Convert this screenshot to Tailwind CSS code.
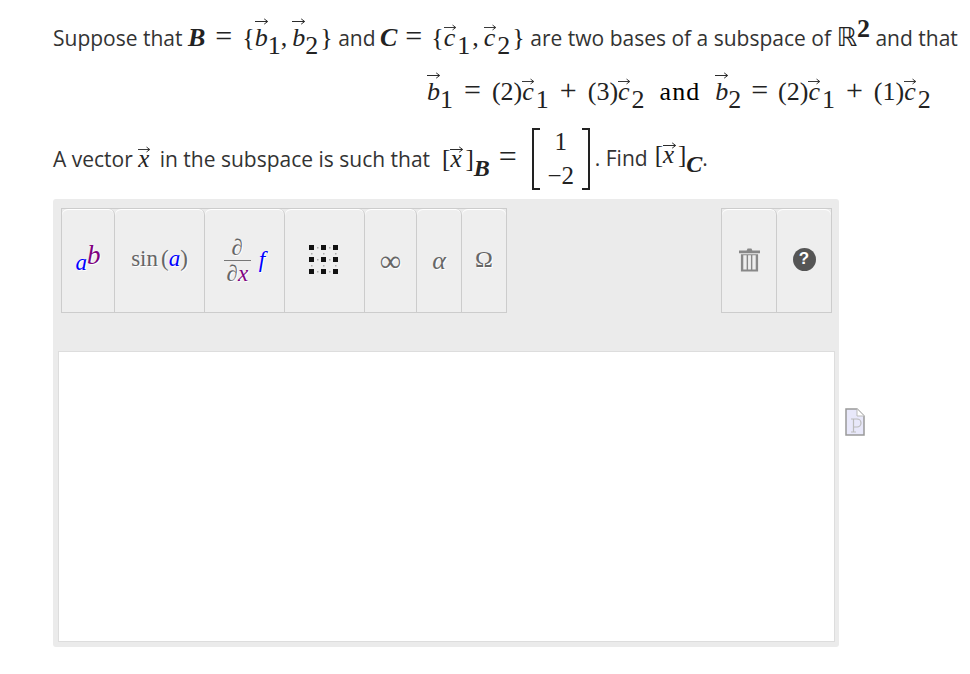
<!DOCTYPE html>
<html lang="en">
  <head>
    <meta charset="UTF-8" />
    <script src="https://cdn.jsdelivr.net/npm/@tailwindcss/browser@4"></script>
    <title>Change of basis</title>
  </head>
  <body class="bg-white w-[970px] h-[674px] overflow-hidden font-['Open_Sans',sans-serif] text-[21px] text-[#333]">
    <svg class="hidden">
      <symbol id="arr" viewBox="0 0 16 8"><path d="M0 4h14M10.500 1l4 3-4 3" fill="none" stroke="#222" stroke-width="1.100" /></symbol>
    </svg>

    <div class="pl-[53px] whitespace-nowrap">
      <!-- first sentence -->
      <div class="h-[68px] pt-[7px] leading-[44px]">
        Suppose that
        <span class="font-['Liberation_Serif',serif] text-[26px] text-[#222]"><b class="italic">B</b><span class="mx-[10px] text-[30px]">=</span>{<span class="relative inline-block italic">b<svg class="absolute left-[0px] top-[2px] w-[14px] h-[7px]"><use href="#arr" /></svg></span><span class="align-[-8px]">1</span><span class="mr-[5px]">,</span><span class="relative inline-block italic">b<svg class="absolute left-[0px] top-[2px] w-[14px] h-[7px]"><use href="#arr" /></svg></span><span class="align-[-8px]">2</span><span class="ml-[2px]">}</span></span>
        and
        <span class="ml-[-1px] font-['Liberation_Serif',serif] text-[26px] text-[#222]"><b class="italic">C</b><span class="ml-[8px] mr-[9px] text-[30px]">=</span>{<span class="relative inline-block italic pr-[2px]">c<svg class="absolute left-[0px] top-[8px] w-[13px] h-[7px]"><use href="#arr" /></svg></span><span class="align-[-8px]">1</span><span class="ml-[2px] mr-[5px]">,</span><span class="relative inline-block italic pr-[2px]">c<svg class="absolute left-[0px] top-[8px] w-[13px] h-[7px]"><use href="#arr" /></svg></span><span class="align-[-8px]">2</span><span class="ml-[2px]">}</span></span>
        are two bases of a subspace of
        <span class="font-['Liberation_Serif',serif] text-[26px] text-[#222]"><span class="font-['DejaVu_Sans',sans-serif] text-[26px]">ℝ</span><span class="align-[9px] font-bold">2</span></span>
        and that
      </div>

      <!-- display equation -->
      <div class="h-[50px] pl-[374px] leading-[44px] font-['Liberation_Serif',serif] text-[26px] text-[#222]">
        <span class="relative inline-block italic">b<svg class="absolute left-[0px] top-[2px] w-[14px] h-[7px]"><use href="#arr" /></svg></span><span class="align-[-8px]">1</span><span class="mx-[11px] text-[30px]">=</span>(2)<span class="relative inline-block italic pr-[2px]">c<svg class="absolute left-[0px] top-[8px] w-[13px] h-[7px]"><use href="#arr" /></svg></span><span class="align-[-8px]">1</span><span class="mx-[11px] text-[30px]">+</span>(3)<span class="relative inline-block italic pr-[2px]">c<svg class="absolute left-[0px] top-[8px] w-[13px] h-[7px]"><use href="#arr" /></svg></span><span class="align-[-8px]">2</span><span class="mx-[15px] tracking-[1px] text-black">and</span><span class="relative inline-block italic">b<svg class="absolute left-[0px] top-[2px] w-[14px] h-[7px]"><use href="#arr" /></svg></span><span class="align-[-8px]">2</span><span class="mx-[10px] text-[30px]">=</span>(2)<span class="relative inline-block italic pr-[2px]">c<svg class="absolute left-[0px] top-[8px] w-[13px] h-[7px]"><use href="#arr" /></svg></span><span class="align-[-8px]">1</span><span class="mx-[11px] text-[30px]">+</span>(1)<span class="relative inline-block italic pr-[2px]">c<svg class="absolute left-[0px] top-[8px] w-[13px] h-[7px]"><use href="#arr" /></svg></span><span class="align-[-8px]">2</span>
      </div>

      <!-- coordinates -->
      <div class="h-[81px] flex items-center">
        <span>A vector <span class="font-['Liberation_Serif',serif] text-[25px] text-[#222]"><span class="relative inline-block italic w-[16px]">x<svg class="absolute left-[0px] top-[6px] w-[13px] h-[7px]"><use href="#arr" /></svg></span></span> in the subspace is such that</span>
        <span class="ml-[12px] font-['Liberation_Serif',serif] text-[25px] text-[#222]">[<span class="relative inline-block italic w-[15px]">x<svg class="absolute left-[0px] top-[6px] w-[14px] h-[7px]"><use href="#arr" /></svg></span>]<b class="italic align-[-9px] text-[24px]">B</b><span class="ml-[9px] text-[32px]">=</span></span>
        <div class="ml-[15px] flex items-stretch h-[62px] font-['Liberation_Serif',serif] text-[25px] text-[#222]">
          <div class="w-[8px] border-2 border-r-0 border-[#222]"></div>
          <div class="w-[42px] flex flex-col items-center justify-between leading-[28px]"><span>1</span><span>−2</span></div>
          <div class="w-[8px] border-2 border-l-0 border-[#222]"></div>
        </div>
        <span class="ml-[5px]">. Find</span>
        <span class="ml-[7px] font-['Liberation_Serif',serif] text-[25px] text-[#222]">[<span class="relative inline-block italic w-[15px]">x<svg class="absolute left-[0px] top-[6px] w-[14px] h-[7px]"><use href="#arr" /></svg></span>]<b class="italic align-[-9px] text-[24px]">C</b></span>
        <span>.</span>
      </div>
    </div>

    <div class="flex items-start">
      <!-- editor -->
      <div class="ml-[53px] w-[786px] h-[448px] bg-[#ebebeb] rounded-[3px] pl-[5px] pr-[4px] pt-[9px] font-['Liberation_Serif',serif] [text-shadow:1px_1px_0_#fff]">
        <div class="flex justify-between pl-[3px] pr-[3px] h-[105px]">
          <div class="flex border border-[#ccc]">
            <div class="w-[53px] border-r border-[#ccc] bg-[#eee] rounded-t-[6px] shadow-[inset_0_1px_0_#fff] flex items-center justify-center pb-[2px]"><span class="italic text-[23px] text-[#0000ff] mt-[8px]">a</span><span class="italic text-[27px] text-[#800080] mb-[8px]">b</span></div>
            <div class="w-[90px] border-r border-[#ccc] bg-[#eee] rounded-t-[6px] shadow-[inset_0_1px_0_#fff] flex items-center justify-center text-[#666] text-[23px] pb-[2px]">sin<span class="ml-[3px]">(</span><span class="italic text-[#0000ff]">a</span>)</div>
            <div class="w-[80px] border-r border-[#ccc] bg-[#eee] rounded-t-[6px] shadow-[inset_0_1px_0_#fff] flex items-center justify-center gap-[8px] text-[23px]">
              <div class="flex flex-col items-center text-[#666] leading-[25px]"><span>∂</span><span class="w-[27px] border-t border-[#777]"></span><span>∂<i class="text-[#800080]">x</i></span></div>
              <span class="italic text-[#0000ff]">f</span>
            </div>
            <div class="w-[80px] border-r border-[#ccc] bg-[#eee] rounded-t-[6px] shadow-[inset_0_1px_0_#fff] flex items-center justify-center pb-[4px]">
              <svg class="w-[32px] h-[32px] mr-[3px]" viewBox="0 0 32 32" fill="#111">
                <path d="M2 2h5v5H2zM14 2h5v5h-5zM26 2h5v5h-5zM2 14h5v5H2zM14 14h5v5h-5zM26 14h5v5h-5zM2 26h5v5H2zM14 26h5v5h-5zM26 26h5v5h-5z" />
                <path fill="#aaa" d="M10 4h1.500v1.500H10zM22 4h1.500v1.500H22zM10 16h1.500v1.500H10zM22 16h1.500v1.500H22zM10 28h1.500v1.500H10zM22 28h1.500v1.500H22zM4 10h1.500v1.500H4zM16 10h1.500v1.500H16zM28 10h1.500v1.500H28zM4 22h1.500v1.500H4zM16 22h1.500v1.500H16zM28 22h1.500v1.500H28z" />
              </svg>
            </div>
            <div class="w-[52px] border-r border-[#ccc] bg-[#eee] rounded-t-[6px] shadow-[inset_0_1px_0_#fff] flex items-center justify-center text-[#666] text-[30px]">∞</div>
            <div class="w-[45px] border-r border-[#ccc] bg-[#eee] rounded-t-[6px] shadow-[inset_0_1px_0_#fff] flex items-center justify-center text-[#666] italic text-[26px]">α</div>
            <div class="w-[44px] bg-[#eee] rounded-t-[6px] shadow-[inset_0_1px_0_#fff] flex items-center justify-center text-[#666] text-[24px] pb-[4px]">Ω</div>
          </div>
          <div class="flex border border-[#ccc]">
            <div class="w-[55px] border-r border-[#ccc] bg-[#eee] rounded-t-[6px] shadow-[inset_0_1px_0_#fff] flex items-center justify-center pb-[3px]">
              <svg class="w-[21px] h-[25px]" viewBox="0 0 22 25">
                <path fill="#888" d="M0 3h8l1-2h4l1 2h8v3H0zM2 7h18v18H2z" />
                <path fill="#eee" d="M4.500 8h3.500v15H4.500zM9.500 8h3v15h-3zM14 8h3.500v15H14z" />
              </svg>
            </div>
            <div class="w-[54px] bg-[#eee] rounded-t-[6px] shadow-[inset_0_1px_0_#fff] flex items-center justify-center pb-[3px]">
              <div class="w-[23px] h-[23px] rounded-full bg-[#555] flex items-center justify-center font-['Liberation_Sans',sans-serif] font-bold text-[17px] text-white [text-shadow:none]">?</div>
            </div>
          </div>
        </div>
        <div class="mt-[38px] h-[291px] bg-white border border-[#ddd]"></div>
      </div>

      <!-- file icon -->
      <svg class="ml-[6px] mt-[209px] w-[20px] h-[28px]" viewBox="0 0 20 28">
        <path d="M1 1h11l7 7v19H1z" fill="#e8e8fa" stroke="#999" stroke-width="1.500" />
        <path d="M12 1v7h7" fill="#fff" stroke="#bbb" />
        <path d="M6 11h6a3 3 0 0 1 0 8H8.500M8.500 11v13M6 24h5" fill="none" stroke="#bbb" stroke-width="1.200" />
      </svg>
    </div>
  </body>
</html>
